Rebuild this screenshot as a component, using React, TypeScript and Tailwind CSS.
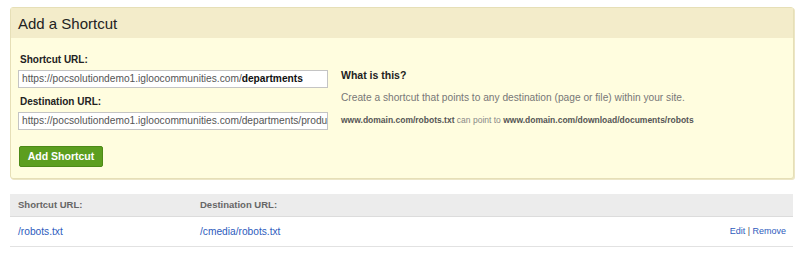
import React from "react";

const font = { fontFamily: '"Liberation Sans", Arial, sans-serif' };

export default function App() {
  return (
    <div className="w-[800px] h-[257px] bg-white text-[#333]" style={font}>
      <div className="pt-[7px] pl-[10px] pr-[6px]">
        {/* Add shortcut panel */}
        <div className="border border-[#e6dfb7] rounded-[3px] bg-[#fffddf] shadow-[1px_1px_0_#ece6c6]">
          <div className="h-[30px] bg-[#f3ecca] px-[7px] flex items-center">
            <h1 className="text-[15px] leading-none text-[#222]">Add a Shortcut</h1>
          </div>
          <div className="flex pl-[7px] pt-[16px] pb-[11px]">
            <div className="w-[310px] flex flex-col">
              <label className="text-[10px] font-bold text-[#222] leading-[12px] ml-[2px]">Shortcut URL:</label>
              <div className="mt-[4px] h-[18px] border border-[#c4c4c4] bg-white text-[10.2px] leading-[16px] px-[3px] text-[#555] whitespace-nowrap overflow-hidden">
                https://pocsolutiondemo1.igloocommunities.com/<span className="font-bold text-[#111]">departments</span>
              </div>
              <label className="mt-[8px] text-[10px] font-bold text-[#222] leading-[12px] ml-[2px]">Destination URL:</label>
              <div className="mt-[4px] h-[18px] border border-[#c4c4c4] bg-white text-[10.2px] leading-[16px] px-[3px] text-[#555] whitespace-nowrap overflow-hidden">
                https://pocsolutiondemo1.igloocommunities.com/departments/products
              </div>
              <button className="mt-[16px] ml-[1px] w-[84px] h-[21px] rounded-[2px] border border-[#4d8a17] bg-[#5c9e1f] text-white text-[10.5px] font-bold leading-none">
                Add Shortcut
              </button>
            </div>
            <div className="ml-[13px] pt-[15px] flex flex-col">
              <p className="text-[10.5px] font-bold text-[#222] leading-[12px]">What is this?</p>
              <p className="mt-[11px] text-[10.2px] text-[#777] leading-[12px]">
                Create a shortcut that points to any destination (page or file) within your site.
              </p>
              <p className="mt-[11px] text-[8.5px] text-[#888] leading-[10px]">
                <span className="font-bold text-[#555]">www.domain.com/robots.txt</span> can point to{" "}
                <span className="font-bold text-[#555]">www.domain.com/download/documents/robots</span>
              </p>
            </div>
          </div>
        </div>

        {/* Shortcut list */}
        <div className="mt-[15px] mr-[1px]">
          <div className="h-[23px] bg-[#ececec] border-b border-[#dcdcdc] flex items-center text-[9.5px] font-bold text-[#666]">
            <div className="w-[190px] pl-[8px]">Shortcut URL:</div>
            <div>Destination URL:</div>
          </div>
          <div className="h-[30px] border-b border-[#e2e2e2] flex items-center text-[10.2px] text-[#2e5cbd]">
            <div className="w-[190px] pl-[8px]">/robots.txt</div>
            <div className="flex-1">/cmedia/robots.txt</div>
            <div className="pr-[7px] text-[9px]">
              Edit <span className="text-[#555]">|</span> Remove
            </div>
          </div>
        </div>
      </div>
    </div>
  );
}
